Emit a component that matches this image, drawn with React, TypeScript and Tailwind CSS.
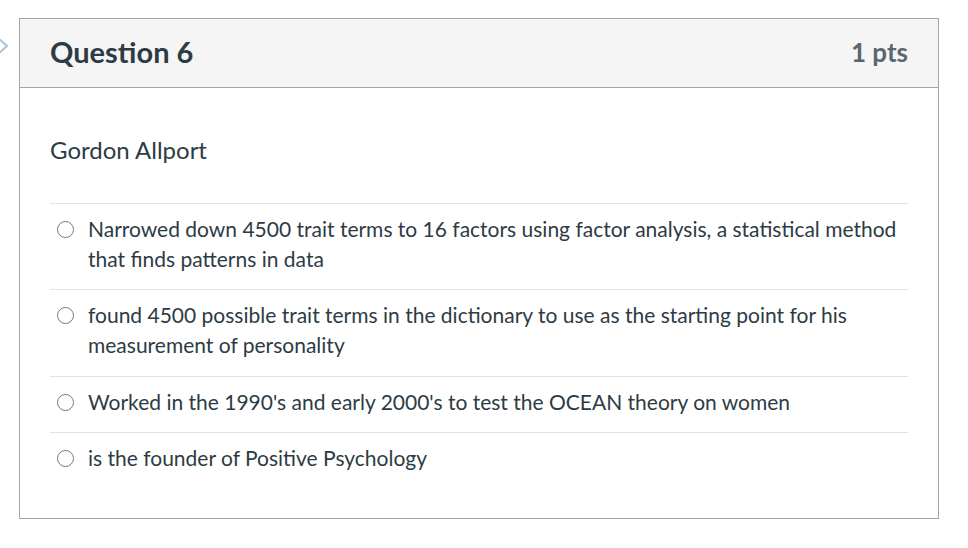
import React from "react";

const answers = [
  "Narrowed down 4500 trait terms to 16 factors using factor analysis, a statistical method that finds patterns in data",
  "found 4500 possible trait terms in the dictionary to use as the starting point for his measurement of personality",
  "Worked in the 1990's and early 2000's to test the OCEAN theory on women",
  "is the founder of Positive Psychology",
];

export default function App() {
  return (
    <div className="relative w-[968px] h-[548px] bg-white text-[#2d3b45]" style={{ fontFamily: "Lato, 'Open Sans', sans-serif" }}>
      <svg className="absolute left-0 top-[37px]" width="10" height="18" viewBox="0 0 10 18">
        <path d="M-2 1 L7 9 L-2 17" fill="none" stroke="#a9c1d9" strokeWidth="2" />
      </svg>
      <div className="pl-[19px] pt-[18px]">
        <div className="w-[920px] h-[501px] border border-[#a5a5a5] flex flex-col">
          <div className="h-[69px] bg-[#f5f5f5] border-b border-[#a5a5a5] flex items-center justify-between pl-[30px] pr-[30px] pb-[3px]">
            <div className="text-[29px] font-bold leading-none">Question 6</div>
            <div className="text-[26px] font-bold leading-none text-[#5b6670] pt-[1px]">1 pts</div>
          </div>
          <div className="px-[30px] pt-[47px]">
            <div className="text-[24px] leading-[30px] mb-[38px]">Gordon Allport</div>
            {answers.map((a, i) => (
              <div key={i} className="border-t border-[#e3e3e3] pt-[10px] pb-[15.4px] flex">
                <div className="w-[38px] shrink-0 pt-[7px] pl-[7px]">
                  <div className="w-[17px] h-[17px] rounded-full border-[1.5px] border-[#777777]" />
                </div>
                <div className="text-[21px] leading-[30px]">{a}</div>
              </div>
            ))}
          </div>
        </div>
      </div>
    </div>
  );
}
